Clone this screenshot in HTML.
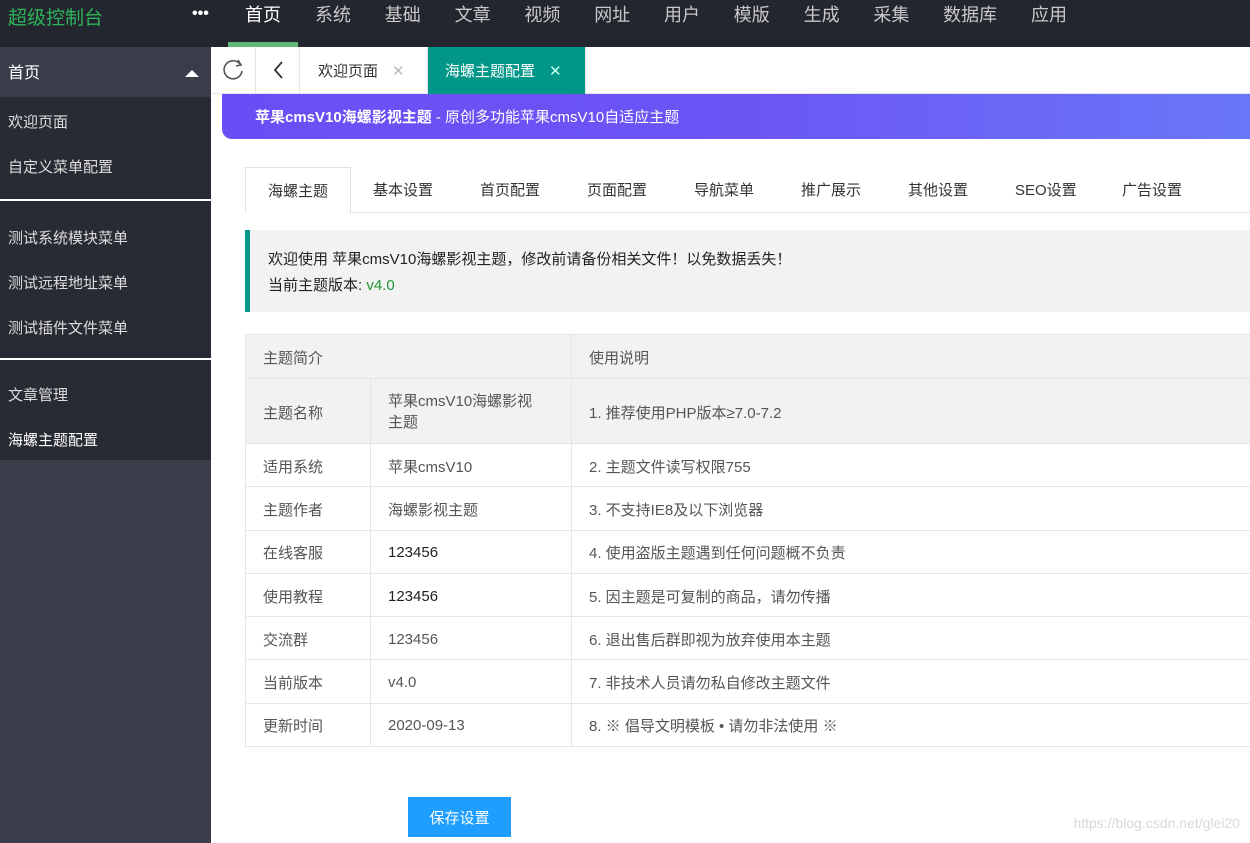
<!DOCTYPE html>
<html><head><meta charset="utf-8"><style>
*{margin:0;padding:0;box-sizing:border-box}
body{width:1250px;height:843px;overflow:hidden;font-family:"Liberation Sans","Noto Sans CJK SC",sans-serif;font-size:15px;color:#333;background:#fff;position:relative}
.top{position:absolute;left:0;top:0;width:1250px;height:47px;background:#23262e}
.logo{position:absolute;left:8px;top:3px;color:#2eb35a;font-size:19px}
.dots{position:absolute;left:192px;top:5px;color:#fff;font-size:16px;font-weight:bold}
.nav{position:absolute;left:228px;top:0;display:flex}
.nav span{display:block;height:47px;line-height:30px;color:#c8c8c8;font-size:18px;padding:0 16.8px 0 17px;white-space:nowrap}
.nav span.on{color:#fff;border-bottom:5px solid #5fb878;width:70px;padding:0 0 0 17px}
.side{position:absolute;left:0;top:47px;width:211px;height:796px;background:#393d49}
.side .h{height:50px;background:#393d49;color:#fff;font-size:16px;line-height:54px;padding-left:8px;position:relative}
.side .h:after{content:"";position:absolute;right:12px;top:23px;border:7px solid transparent;border-bottom-color:#fff;border-top:0}
.grp{background:#282b33}
.grp div{height:45px;line-height:51px;padding-left:8px;color:#ddd;font-size:15px}
.sep{height:2px;background:#fff;margin:0}
.tabs{position:absolute;left:211px;top:47px;right:0;height:47px;border-bottom:1px solid #e6e6e6;background:#fff}
.tabs div{position:absolute;top:0;height:47px;line-height:50px;border-right:1px solid #e6e6e6}
.banner{position:absolute;left:222px;top:94px;width:1040px;height:45px;border-radius:0 0 0 10px;background:linear-gradient(90deg,#6a4ef5,#6b55f5 50%,#6a78f8 100%);color:#fff;line-height:47px;padding-left:33px;font-size:15px}
.st{position:absolute;left:245px;top:167px;right:0;height:46px;border-bottom:1px solid #e2e2e2}
.st span{position:absolute;top:0;height:46px;line-height:48px;font-size:15px;color:#333}
.st span.on{border:1px solid #e2e2e2;border-bottom:1px solid #fff;height:47px;background:#fff;padding:0 22px;left:0}
.note{position:absolute;left:245px;top:230px;right:0;height:82px;background:#f2f2f2;border-left:5px solid #009688;padding:17px 0 0 18px;line-height:26px;font-size:15px;color:#222}
table{position:absolute;left:245px;top:334px;width:1010px;border-collapse:collapse;font-size:15px;color:#555}
td{border:1px solid #e6e6e6;padding:2px 17px 0;height:43.3px}
.hd td{background:#f2f2f2;height:44px}
.g td{background:#f2f2f2}
.btn{position:absolute;left:408px;top:797px;width:103px;height:40px;background:#1e9fff;color:#fff;text-align:center;line-height:44px;font-size:15px}
.wm{position:absolute;right:10px;top:815px;color:#d8d8d8;font-size:14px}
</style></head><body>
<div class="top"><div class="logo">超级控制台</div><div class="dots">•••</div>
<div class="nav"><span class="on">首页</span><span>系统</span><span>基础</span><span>文章</span><span>视频</span><span>网址</span><span>用户</span><span>模版</span><span>生成</span><span>采集</span><span>数据库</span><span>应用</span></div></div>
<div class="side"><div class="h">首页</div>
<div class="grp"><div>欢迎页面</div><div>自定义菜单配置</div><div style="height:12px"></div></div><div class="sep"></div>
<div class="grp"><div style="height:12px"></div><div>测试系统模块菜单</div><div>测试远程地址菜单</div><div>测试插件文件菜单</div><div style="height:10px"></div></div><div class="sep"></div>
<div class="grp"><div style="height:10px"></div><div>文章管理</div><div style="color:#fff">海螺主题配置</div></div></div>
<div class="tabs">
<div style="left:0;width:45px"><svg width="45" height="47"><path d="M29 17 A9 9 0 1 0 31 24" fill="none" stroke="#555" stroke-width="1.6"/><path d="M27 13 L30 18 L25 19" fill="none" stroke="#555" stroke-width="1.6"/></svg></div>
<div style="left:45px;width:44px"><svg width="44" height="47"><path d="M26 15 L19 23 L26 31" fill="none" stroke="#333" stroke-width="1.8"/></svg></div>
<div style="left:89px;width:128px;padding-left:18px">欢迎页面<span style="color:#bbb;margin-left:14px">✕</span></div>
<div style="left:217px;width:158px;background:#009688;color:#fff;padding-left:17px">海螺主题配置<span style="color:#cfe;margin-left:14px">✕</span></div>
</div>
<div class="banner"><b>苹果cmsV10海螺影视主题</b> - 原创多功能苹果cmsV10自适应主题</div>
<div class="st"><span class="on">海螺主题</span><span style="left:128px">基本设置</span><span style="left:235px">首页配置</span><span style="left:342px">页面配置</span><span style="left:449px">导航菜单</span><span style="left:556px">推广展示</span><span style="left:663px">其他设置</span><span style="left:770px">SEO设置</span><span style="left:877px">广告设置</span></div>
<div class="note">欢迎使用 苹果cmsV10海螺影视主题，修改前请备份相关文件！以免数据丢失！<br>当前主题版本: <span style="color:#1e9632">v4.0</span></div>
<table>
<tr class="hd"><td colspan="2">主题简介</td><td>使用说明</td></tr>
<tr class="g"><td style="width:125px;height:65px">主题名称</td><td style="width:201px;line-height:21px">苹果cmsV10海螺影视<br>主题</td><td>1. 推荐使用PHP版本≥7.0-7.2</td></tr>
<tr><td>适用系统</td><td>苹果cmsV10</td><td>2. 主题文件读写权限755</td></tr>
<tr><td>主题作者</td><td>海螺影视主题</td><td>3. 不支持IE8及以下浏览器</td></tr>
<tr><td>在线客服</td><td style="color:#222">123456</td><td>4. 使用盗版主题遇到任何问题概不负责</td></tr>
<tr><td>使用教程</td><td style="color:#222">123456</td><td>5. 因主题是可复制的商品，请勿传播</td></tr>
<tr><td>交流群</td><td>123456</td><td>6. 退出售后群即视为放弃使用本主题</td></tr>
<tr><td>当前版本</td><td>v4.0</td><td>7. 非技术人员请勿私自修改主题文件</td></tr>
<tr><td>更新时间</td><td>2020-09-13</td><td>8. ※ 倡导文明模板 • 请勿非法使用 ※</td></tr>
</table>
<div class="btn">保存设置</div>
<div class="wm">https://blog.csdn.net/glei20</div>
</body></html>
